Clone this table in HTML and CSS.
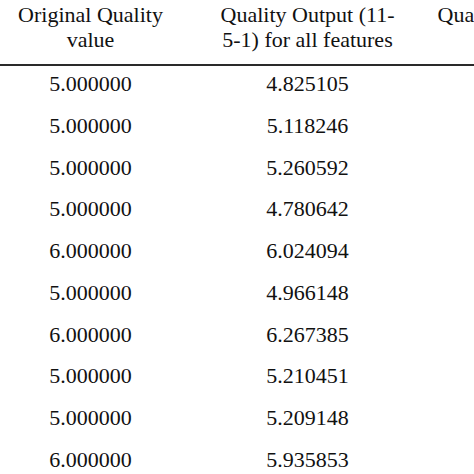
FILE: index.html
```html
<!DOCTYPE html>
<html>
<head>
<meta charset="utf-8">
<link rel="stylesheet" href="styles.css">
</head>
<body>
<div class="frame">
<table class="results">
<thead>
<tr>
<th>Original Quality<br>value</th>
<th>Quality Output (11-<br>5-1) for all features</th>
<th class="top">Quality Output (11-</th>
</tr>
</thead>
<tbody>
<tr><td>5.000000</td><td>4.825105</td><td></td></tr>
<tr><td>5.000000</td><td>5.118246</td><td></td></tr>
<tr><td>5.000000</td><td>5.260592</td><td></td></tr>
<tr><td>5.000000</td><td>4.780642</td><td></td></tr>
<tr><td>6.000000</td><td>6.024094</td><td></td></tr>
<tr><td>5.000000</td><td>4.966148</td><td></td></tr>
<tr><td>6.000000</td><td>6.267385</td><td></td></tr>
<tr><td>5.000000</td><td>5.210451</td><td></td></tr>
<tr><td>5.000000</td><td>5.209148</td><td></td></tr>
<tr><td>6.000000</td><td>5.935853</td><td></td></tr>
</tbody>
</table>
</div>
</body>
</html>
```
FILE: styles.css
```css
html, body {
  margin: 0;
  padding: 0;
  background: #ffffff;
}
.frame {
  width: 474px;
  height: 474px;
  overflow: hidden;
}
.results {
  margin-left: -18px;
  border-collapse: collapse;
  table-layout: fixed;
  width: 651px;
  font-family: "Liberation Serif", "Times New Roman", serif;
  font-size: 22px;
  line-height: 25px;
  color: #111111;
}
.results th {
  width: 217px;
  font-weight: normal;
  text-align: center;
  padding: 2px 0 12px 0;
  border-bottom: 2px solid #2a2a2a;
  white-space: nowrap;
}
.results th.top {
  vertical-align: top;
}
.results td {
  text-align: center;
  padding: 5px 0 11.78px 0;
  white-space: nowrap;
}
```
